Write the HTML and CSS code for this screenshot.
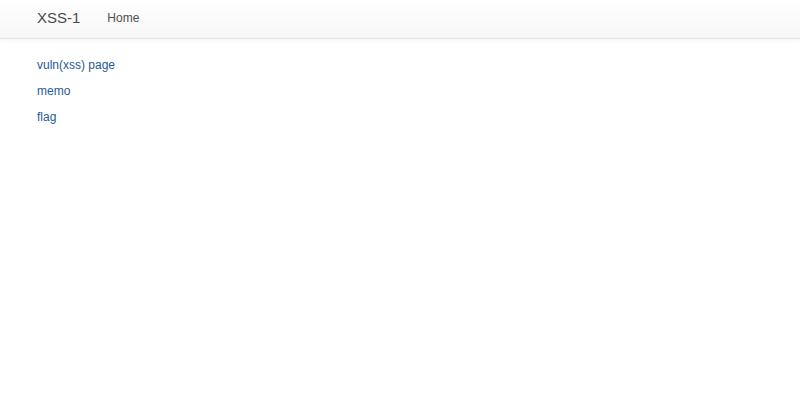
FILE: index.html
```html
<!DOCTYPE html>
<html lang="en">
<head>
    <meta charset="UTF-8">
    <meta name="viewport" content="width=device-width, initial-scale=1.0">
    <title>XSS-1</title>
    <link rel="stylesheet" href="styles.css">
</head>
<body>
    <nav class="navbar">
        <div class="container">
            <a class="navbar-brand" href="/">XSS-1</a>
            <ul class="nav">
                <li><a href="/">Home</a></li>
            </ul>
        </div>
    </nav>
    <div class="container content">
        <p><a href="/vuln?param=<script>alert(1)</script>">vuln(xss) page</a></p>
        <p><a href="/memo?memo=hello">memo</a></p>
        <p><a href="/flag">flag</a></p>
    </div>
</body>
</html>
```

FILE: styles.css
```css
body {
    margin: 0;
    font-family: "Liberation Sans", Arial, sans-serif;
    font-size: 13px;
    color: #333;
    background-color: #fff;
}
a {
    text-decoration: none;
}
.container {
    padding: 0 37px;
}
.navbar {
    height: 38px;
    background-image: linear-gradient(to bottom, #fff 0, #f6f6f6 100%);
    border-bottom: 1px solid #e4e4e4;
    box-shadow: 0 1px 5px rgba(0, 0, 0, 0.06);
}
.navbar .container {
    display: flex;
    align-items: center;
    height: 100%;
    box-sizing: border-box;
    padding-bottom: 4px;
}
.navbar-brand {
    font-size: 15px;
    color: #4a4a4a;
    margin-right: 27px;
}
.nav {
    display: flex;
    list-style: none;
    margin: 0;
    padding: 0;
}
.nav a {
    font-size: 12px;
    color: #4f4f4f;
}
.content {
    padding-top: 19px;
}
.content p {
    margin: 0 0 11px;
    line-height: 15px;
    font-size: 12px;
}
.content a {
    color: #1f5a99;
}
```
